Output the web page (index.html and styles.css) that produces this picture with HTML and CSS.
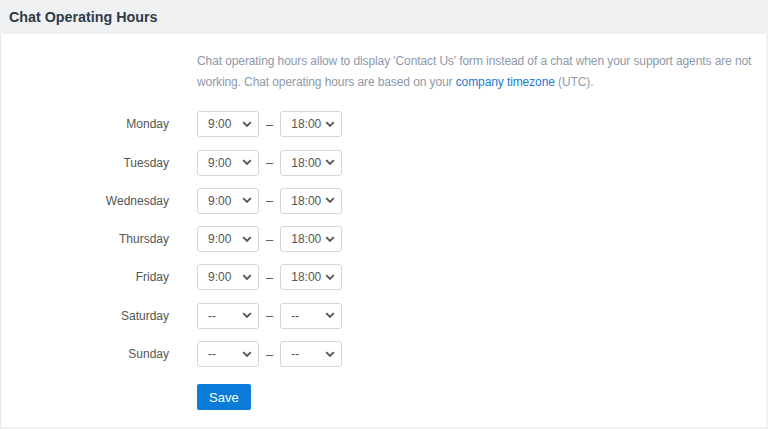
FILE: index.html
```html
<!DOCTYPE html>
<html lang="en">
<head>
    <meta charset="UTF-8">
    <meta name="viewport" content="width=device-width, initial-scale=1.0">
    <title>Chat Operating Hours</title>
    <link rel="stylesheet" href="styles.css">
</head>
<body>
    <div class="page-header">
        <h1>Chat Operating Hours</h1>
    </div>
    <div class="panel">
        <form class="hours-form">
            <div class="spacer"></div>
            <p class="hint">Chat operating hours allow to display 'Contact Us' form instead of a chat when your support agents are not working. Chat operating hours are based on your <a href="#">company timezone</a> (UTC).</p>

            <label class="day">Monday</label>
            <div class="range">
                <select><option>9:00</option></select>
                <span class="dash">&ndash;</span>
                <select><option>18:00</option></select>
            </div>

            <label class="day">Tuesday</label>
            <div class="range">
                <select><option>9:00</option></select>
                <span class="dash">&ndash;</span>
                <select><option>18:00</option></select>
            </div>

            <label class="day">Wednesday</label>
            <div class="range">
                <select><option>9:00</option></select>
                <span class="dash">&ndash;</span>
                <select><option>18:00</option></select>
            </div>

            <label class="day">Thursday</label>
            <div class="range">
                <select><option>9:00</option></select>
                <span class="dash">&ndash;</span>
                <select><option>18:00</option></select>
            </div>

            <label class="day">Friday</label>
            <div class="range">
                <select><option>9:00</option></select>
                <span class="dash">&ndash;</span>
                <select><option>18:00</option></select>
            </div>

            <label class="day">Saturday</label>
            <div class="range">
                <select><option>--</option></select>
                <span class="dash">&ndash;</span>
                <select><option>--</option></select>
            </div>

            <label class="day">Sunday</label>
            <div class="range">
                <select><option>--</option></select>
                <span class="dash">&ndash;</span>
                <select><option>--</option></select>
            </div>

            <div class="spacer"></div>
            <div class="actions">
                <button type="submit">Save</button>
            </div>
        </form>
    </div>
</body>
</html>
```
FILE: styles.css
```css
body {
    font-family: "Liberation Sans", Arial, sans-serif;
    margin: 0;
    background-color: #f0f1f3;
    color: #555;
    font-size: 12px;
}

.page-header {
    height: 34px;
    padding: 0 9px;
}

h1 {
    margin: 0;
    font-size: 14.3px;
    line-height: 34px;
    color: #2e3a47;
}

.panel {
    background-color: #fff;
    border-left: 1px solid #e4e6e9;
    margin-right: 2px;
    height: 393px;
    box-sizing: border-box;
    padding-top: 17px;
}

.hours-form {
    display: grid;
    grid-template-columns: 168px 1fr;
    column-gap: 28px;
    row-gap: 12.3px;
    align-items: center;
}

.hint {
    margin: 0 0 6px 0;
    font-size: 12px;
    letter-spacing: -0.1px;
    line-height: 21px;
    color: #8d99aa;
}

.hint a {
    color: #1a7ad4;
    text-decoration: none;
}

.day {
    text-align: right;
    color: #555;
}

.range {
    display: flex;
    align-items: center;
}

select {
    appearance: none;
    -webkit-appearance: none;
    width: 62px;
    height: 26px;
    padding: 0 0 0 10px;
    border: 1px solid #d3d7dc;
    border-radius: 3px;
    background-color: #fff;
    background-image: url("data:image/svg+xml,%3Csvg xmlns='http://www.w3.org/2000/svg' width='10' height='7' viewBox='0 0 10 7'%3E%3Cpath d='M1.2 1.2 5 5 8.8 1.2' fill='none' stroke='%23555' stroke-width='1.9'/%3E%3C/svg%3E");
    background-repeat: no-repeat;
    background-position: right 6px center;
    font-family: inherit;
    font-size: 12px;
    color: #555;
}

.dash {
    margin: 0 7px;
    color: #555;
    font-size: 13px;
}

.actions {
    margin-top: 5px;
}

button[type="submit"] {
    height: 26px;
    padding: 0 12px;
    border: none;
    border-radius: 2px;
    background-color: #0a7bd8;
    color: #fff;
    font-family: inherit;
    font-size: 13px;
    cursor: pointer;
}
```
